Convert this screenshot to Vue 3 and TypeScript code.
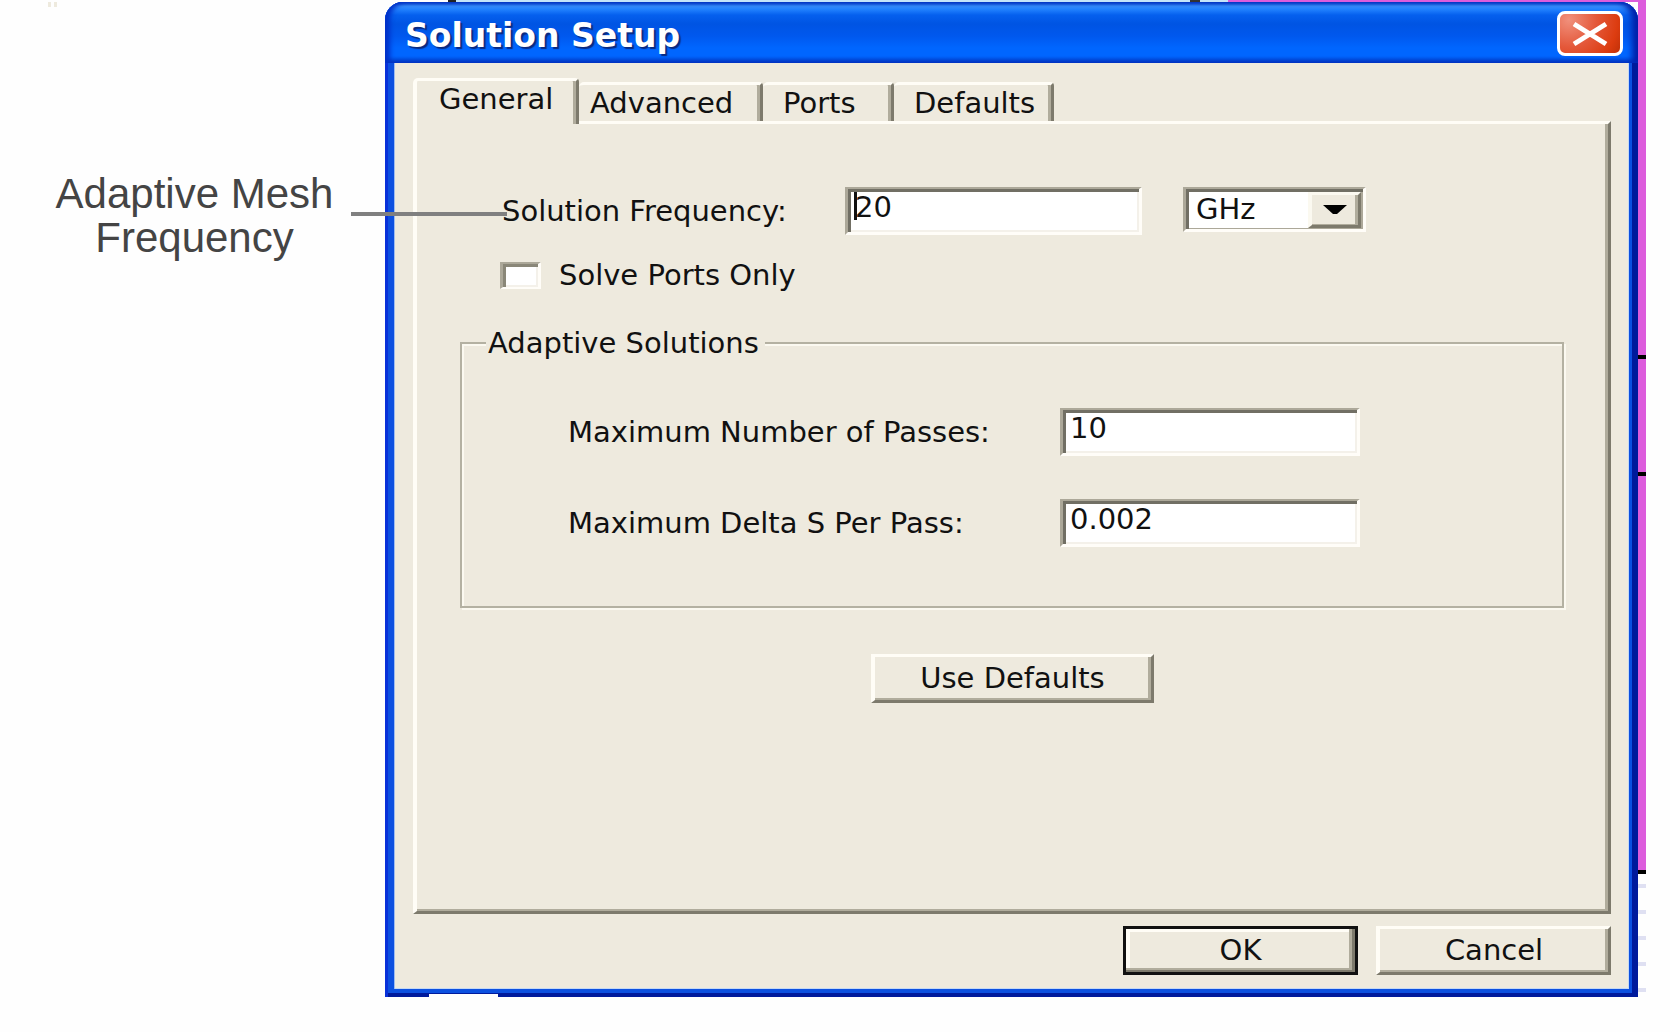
<script setup lang="ts">
import { ref } from 'vue'

const tabs = ['General', 'Advanced', 'Ports', 'Defaults']
const active = ref('General')
const frequency = ref('20')
const unit = ref('GHz')
const portsOnly = ref(false)
const passes = ref('10')
const deltaS = ref('0.002')

function useDefaults() {
  frequency.value = '20'
  unit.value = 'GHz'
  portsOnly.value = false
  passes.value = '10'
  deltaS.value = '0.002'
}
</script>

<template>
  <main class="page">
    <aside class="note">
      <span class="speck"></span>
      <p class="note-text">Adaptive Mesh<br />Frequency</p>
      <span class="leader"></span>
    </aside>

    <section class="dialog" role="dialog" aria-labelledby="dialog-title">
      <header class="titlebar">
        <h1 id="dialog-title" class="title">Solution Setup</h1>
        <button class="close" type="button" aria-label="Close">
          <svg viewBox="0 0 38 26" width="38" height="26" aria-hidden="true">
            <path d="M3 3 L35 23 M35 3 L3 23" stroke="#fff" stroke-width="5" fill="none" />
          </svg>
        </button>
      </header>

      <form class="body" @submit.prevent>
        <div class="tabs" role="tablist">
          <button
            v-for="tab in tabs"
            :key="tab"
            type="button"
            role="tab"
            class="tab"
            :class="[tab.toLowerCase(), { active: tab === active }]"
            :aria-selected="tab === active"
            @click="active = tab"
          >
            {{ tab }}
          </button>
        </div>

        <div class="panel" role="tabpanel">
          <div class="row frequency-row">
            <label class="frequency-label" for="frequency">Solution Frequency:</label>
            <div class="caret-field">
              <input id="frequency" v-model="frequency" class="field frequency" type="text" />
              <span class="caret"></span>
            </div>
            <div class="combo">
              <select v-model="unit" class="unit" aria-label="Frequency unit">
                <option>GHz</option>
                <option>MHz</option>
                <option>kHz</option>
              </select>
              <span class="drop">
                <svg viewBox="0 0 24 10" width="24" height="10" aria-hidden="true">
                  <path d="M0 0 H24 L14 9 H10 Z" fill="#000" />
                </svg>
              </span>
            </div>
          </div>

          <div class="row ports-row">
            <input id="ports-only" v-model="portsOnly" class="check" type="checkbox" />
            <label for="ports-only">Solve Ports Only</label>
          </div>

          <fieldset class="group">
            <legend class="legend">Adaptive Solutions</legend>
            <div class="row">
              <label class="group-label" for="passes">Maximum Number of Passes:</label>
              <input id="passes" v-model="passes" class="field" type="text" />
            </div>
            <div class="row">
              <label class="group-label" for="delta">Maximum Delta S Per Pass:</label>
              <input id="delta" v-model="deltaS" class="field" type="text" />
            </div>
          </fieldset>

          <button class="button defaults-button" type="button" @click="useDefaults">Use Defaults</button>
        </div>

        <footer class="actions">
          <button class="button primary" type="submit">OK</button>
          <button class="button" type="button">Cancel</button>
        </footer>
      </form>
      <span class="notch"></span>
    </section>

    <div class="backdrop" aria-hidden="true">
      <span class="block first"></span>
      <span class="block second"></span>
      <span class="block third"></span>
    </div>
  </main>
</template>

<style>
body {
  margin: 0;
  background: #fefefe;
}
</style>

<style scoped>
.page {
  display: flex;
  padding: 2px 24px 32px 0;
  background: linear-gradient(90deg, transparent 448px, #222 448px 456px, #c4e4fa 456px 1190px, #333 1190px 1200px, #c4e4fa 1200px 1228px, #dc5cdc 1228px) 0 0 / calc(100% - 24px) 2px no-repeat;
  font-family: 'DejaVu Sans', Verdana, sans-serif;
  font-size: 29px;
  line-height: 34px;
  color: #111;
}

button,
input,
select {
  box-sizing: border-box;
  margin: 0;
  font: inherit;
  color: inherit;
  border-radius: 0;
  outline: 0;
}

.note {
  position: relative;
  flex: 0 0 385px;
  box-sizing: border-box;
  padding: 170px 16px 0 20px;
}

.note-text {
  margin: 0;
  font-family: 'Liberation Sans', Arial, sans-serif;
  font-size: 42px;
  line-height: 44px;
  text-align: center;
  white-space: nowrap;
  color: #444;
}

.speck {
  position: absolute;
  top: 0;
  left: 48px;
  width: 3px;
  height: 5px;
  border: solid #eeeade;
  border-width: 0 3px;
}

.leader {
  position: absolute;
  z-index: 1;
  top: 210px;
  left: 351px;
  width: 156px;
  height: 4px;
  background: #808080;
}

.dialog {
  position: relative;
  flex: 1;
  min-width: 0;
  box-sizing: border-box;
  padding: 0 9px 8px;
  border-radius: 18px 18px 0 0;
  background: #0c50e0;
  box-shadow: inset 3px 0 #0831d9, inset -6px -4px #001a9c;
}

.notch {
  position: absolute;
  bottom: 0;
  left: 44px;
  width: 69px;
  height: 3px;
  background: #fefefe;
}

.titlebar {
  display: flex;
  align-items: center;
  justify-content: space-between;
  height: 61px;
  box-sizing: border-box;
  margin: 0 -9px;
  padding: 2px 15px 0 20px;
  border-radius: 18px 18px 0 0;
  background: linear-gradient(#0a52d8 0, #3a96ff 4px, #2383ff 7px, #0560ee 13px, #0054e3 22px, #0058ee 34px, #0066ff 46px, #0066ff 54px, #0048d0 61px);
  box-shadow: inset 5px 0 5px #0030c8, inset -6px 0 6px #0020a8;
}

.title {
  margin: 0;
  padding-top: 4px;
  font-size: 33px;
  line-height: 40px;
  font-weight: bold;
  color: #fff;
  text-shadow: 2px 2px 1px #0a2a80;
}

.close {
  display: flex;
  align-items: center;
  justify-content: center;
  width: 66px;
  height: 45px;
  padding: 0;
  border: 3px solid #fff;
  border-radius: 8px;
  background: radial-gradient(circle at 15% 15%, #f0907c 0, #e4583a 45%, #dc3c10 80%, #c03008 100%);
}

.body {
  padding: 15px 18px 14px 19px;
  background: #eeeade;
  box-shadow: inset 1px 0 #9dbcf0, inset -1px -1px #c4d8f4;
}

.tabs {
  display: flex;
  align-items: flex-end;
  height: 43px;
}

.tab {
  height: 39px;
  padding: 0 0 0 11px;
  border: 0;
  border-top: 3px solid #fffdf6;
  border-right: 3px solid #7d7a6c;
  border-radius: 5px 4px 0 0;
  background: #eeeade;
  box-shadow: inset -3px 0 #b0ac9c;
  text-align: left;
  line-height: 34px;
}

.tab.general {
  width: 166px;
}

.tab.advanced {
  width: 184px;
}

.tab.ports {
  width: 131px;
  padding-left: 20px;
}

.tab.defaults {
  width: 160px;
  padding-left: 20px;
}

.tab.active {
  z-index: 1;
  height: 46px;
  margin-bottom: -3px;
  padding: 0 0 8px 22px;
  border-left: 4px solid #fffdf6;
}

.panel {
  padding: 63px 44px 208px 43px;
  border-style: solid;
  border-width: 3px 3px 3px 4px;
  border-color: #fffdf6 #7d7a6c #7d7a6c #fffdf6;
  box-shadow: inset -3px -2px #b0ac9c;
}

.row {
  display: flex;
  align-items: center;
}

.frequency-row {
  align-items: flex-start;
  padding-left: 42px;
}

.frequency-label {
  width: 343px;
  line-height: 48px;
  white-space: nowrap;
}

.field {
  width: 300px;
  height: 48px;
  padding: 0 8px 7px 7px;
  border-style: solid;
  border-width: 2px 3px 3px 3px;
  border-color: #aca899 #fffdf8 #fffdf8 #aca899;
  background: #fff;
  box-shadow: inset 3px 3px #716f64, inset -2px -2px #f4f1ea;
}

.field.frequency {
  width: 297px;
}

.caret-field {
  position: relative;
  display: flex;
  margin-right: 41px;
}

.caret {
  position: absolute;
  top: 5px;
  left: 9px;
  width: 3px;
  height: 28px;
  background: #111;
}

.combo {
  position: relative;
  display: flex;
}

.unit {
  width: 183px;
  height: 45px;
  padding: 0 56px 1px 10px;
  border-style: solid;
  border-width: 2px 3px 3px 3px;
  border-color: #aca899 #fffdf8 #fffdf8 #aca899;
  background: #fff;
  box-shadow: inset 3px 3px #716f64, inset -3px -1px #aca899;
  appearance: none;
}

.drop {
  position: absolute;
  top: 5px;
  right: 5px;
  display: flex;
  align-items: center;
  justify-content: center;
  width: 53px;
  height: 36px;
  box-sizing: border-box;
  border-style: solid;
  border-width: 3px 3px 3px 4px;
  border-color: #fbf9f0 #7d7a6c #7d7a6c #fbf9f0;
  background: #eeeade;
  box-shadow: inset -3px -1px #b0ac9c;
  pointer-events: none;
}

.ports-row {
  gap: 18px;
  margin-top: 23px;
  padding-left: 40px;
}

.check {
  width: 41px;
  height: 27px;
  border-style: solid;
  border-width: 2px 3px 2px 3px;
  border-color: #aca899 #fffdf8 #fffdf8 #aca899;
  background: #fff;
  box-shadow: inset 3px 3px #8a8778, inset -2px -2px #f4f1ea;
  appearance: none;
}

.check:checked {
  background: radial-gradient(circle, #111 0 6px, #fff 7px);
}

.group {
  display: flex;
  flex-direction: column;
  gap: 43px;
  margin: 34px 0 0;
  padding: 48px 0 59px 106px;
  border: 2px solid #b4b1a2;
  box-shadow: inset 2px 2px #fbf9f0, 2px 2px #fbf9f0;
}

.legend {
  margin-left: -82px;
  padding: 0 6px 0 2px;
  background: #eeeade;
}

.group-label {
  width: 492px;
  white-space: nowrap;
}

.button {
  width: 235px;
  height: 49px;
  padding: 0 0 1px;
  border-style: solid;
  border-width: 3px 3px 3px 4px;
  border-color: #fffdf6 #7d7a6c #7d7a6c #fffdf6;
  background: #eeeade;
  box-shadow: inset -3px -2px #b0ac9c;
  text-align: center;
}

.defaults-button {
  display: block;
  width: 283px;
  margin: 46px auto 0;
}

.primary {
  border: 3px solid #111;
  box-shadow: inset -3px -2px #7d7a6c, inset -6px -4px #b0ac9c, inset 4px 3px #fffdf6;
}

.actions {
  display: flex;
  justify-content: flex-end;
  gap: 18px;
  margin-top: 12px;
}

.backdrop {
  display: flex;
  flex-direction: column;
  width: 8px;
  margin-top: -2px;
  background: linear-gradient(#dfe0f2 0 4px, #fefefe 4px 26px) 0 0 / 8px 26px;
}

.block {
  border-bottom: 4px solid #000;
  background: #dc5cdc;
}

.first {
  height: 355px;
}

.second {
  height: 113px;
}

.third {
  height: 394px;
}
</style>
